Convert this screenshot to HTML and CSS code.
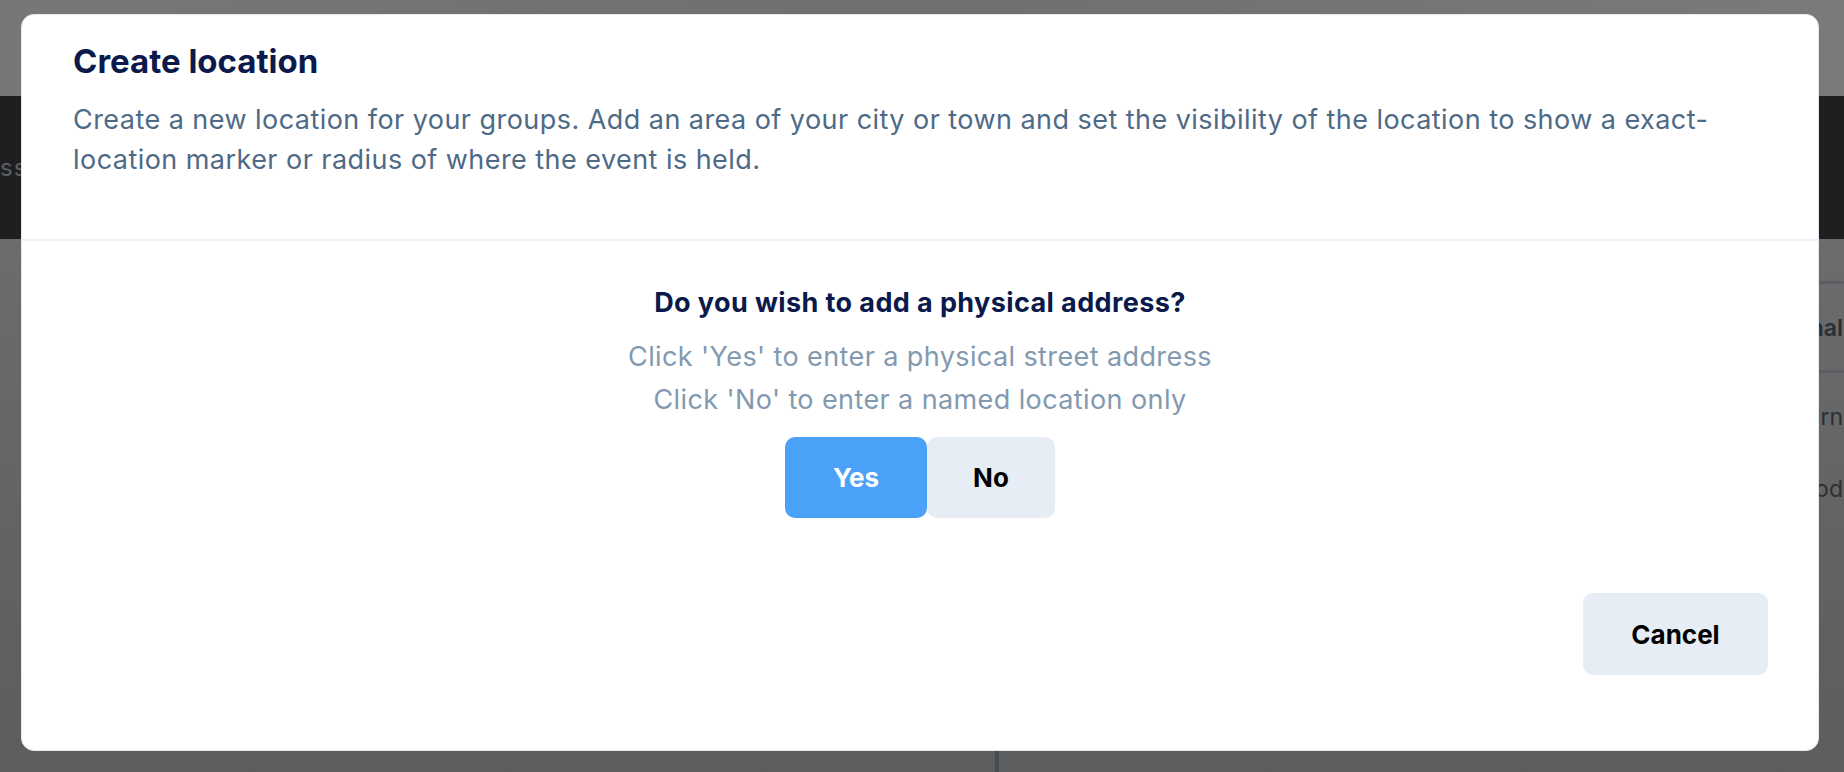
FILE: index.html
```html
<!DOCTYPE html>
<html lang="en">
<head>
<meta charset="utf-8">
<title>Create location</title>
<link rel="stylesheet" href="styles.css">
</head>
<body>
<div class="page">
  <div class="topbar"></div>
  <nav class="navbar"><span class="nav-item">ss</span></nav>
  <main class="content">
    <div class="content-left"></div>
    <div class="content-right">
      <div class="table">
        <div class="table-head">Signal</div>
        <div class="table-row">Learn</div>
        <div class="table-row">Good</div>
      </div>
    </div>
  </main>
</div>

<div class="modal" role="dialog" aria-labelledby="modal-title">
  <header class="modal-header">
    <h2 class="modal-title" id="modal-title">Create location</h2>
    <p class="modal-desc">Create a new location for your groups. Add an area of your city or town and set the visibility of the location to show a exact-location marker or radius of where the event is held.</p>
  </header>
  <section class="modal-body">
    <h3 class="question">Do you wish to add a physical address?</h3>
    <p class="hint">Click 'Yes' to enter a physical street address<br>Click 'No' to enter a named location only</p>
    <div class="choice">
      <button class="btn btn-yes" type="button">Yes</button>
      <button class="btn btn-no" type="button">No</button>
    </div>
  </section>
  <footer class="modal-footer">
    <button class="btn btn-cancel" type="button">Cancel</button>
  </footer>
</div>
</body>
</html>
```

FILE: styles.css
```css
* { box-sizing: border-box; }

html, body {
  margin: 0;
  padding: 0;
  width: 1844px;
  height: 772px;
  overflow: hidden;
  font-family: Inter, "Noto Sans", "Liberation Sans", sans-serif;
}

.page {
  display: flex;
  flex-direction: column;
  height: 772px;
}

.topbar {
  height: 96px;
  background: linear-gradient(90deg, #777777 0%, #6f6f6f 50%, #7a7a7a 100%);
}

.navbar {
  height: 143px;
  background: #1e1f21;
  display: flex;
  align-items: center;
}

.nav-item {
  margin-left: 0;
  font-size: 24px;
  color: #5c5e62;
  letter-spacing: 1px;
}

.content {
  flex: 1;
  display: flex;
  background: linear-gradient(180deg, #6c6c6c 0%, #626262 60%, #5c5d5e 100%);
}

.content-left {
  flex: 0 0 999px;
  border-right: 4px solid #474b50;
}

.content-right {
  flex: 1 1 auto;
  min-width: 0;
  overflow: hidden;
  padding-left: 760px;
  padding-top: 42px;
}

.table {
  border-top: 3px solid #5a5e63;
  color: #2a2f36;
  font-size: 23px;
  white-space: nowrap;
  text-align: right;
}

.table-head {
  height: 89px;
  line-height: 89px;
  font-weight: 600;
  border-bottom: 3px solid #5a5e63;
  padding-right: 1px;
}

.table-row {
  height: 72px;
  line-height: 88px;
  padding-right: 1px;
}

/* Modal */
.modal {
  position: absolute;
  left: 21px;
  top: 14px;
  width: 1798px;
  height: 737px;
  background: #ffffff;
  border: 1px solid #e3e9f0;
  border-radius: 13px;
  display: flex;
  flex-direction: column;
  overflow: hidden;
}

.modal-header {
  height: 226px;
  padding: 24px 51px 0;
  border-bottom: 2px solid #eef2f6;
}

.modal-title {
  margin: 0;
  font-size: 33px;
  line-height: 45px;
  font-weight: 700;
  color: #0b1a4b;
}

.modal-desc {
  margin: 16px 0 0;
  font-size: 27px;
  line-height: 40px;
  letter-spacing: 0.45px;
  color: #4e6a86;
}

.modal-body {
  display: flex;
  flex-direction: column;
  align-items: center;
  padding-top: 42px;
}

.question {
  margin: 0;
  font-size: 27px;
  line-height: 40px;
  letter-spacing: 0.4px;
  font-weight: 700;
  color: #0b1a4b;
}

.hint {
  margin: 12px 0 0;
  font-size: 27px;
  line-height: 43px;
  letter-spacing: 0.4px;
  color: #8299b0;
  text-align: center;
}

.choice {
  display: flex;
  margin-top: 16px;
}

.btn {
  border: none;
  font-family: inherit;
  font-size: 26px;
  font-weight: 700;
  border-radius: 10px;
  cursor: pointer;
  padding: 0;
}

.btn-yes {
  width: 142px;
  height: 81px;
  background: #4ba0f7;
  color: #ffffff;
}

.btn-no {
  width: 128px;
  height: 81px;
  background: #e6edf5;
  color: #000000;
}

.modal-footer {
  display: flex;
  justify-content: flex-end;
  padding: 0 50px;
  margin-top: 75px;
}

.btn-cancel {
  width: 185px;
  height: 82px;
  background: #e6edf5;
  color: #000000;
}
```
